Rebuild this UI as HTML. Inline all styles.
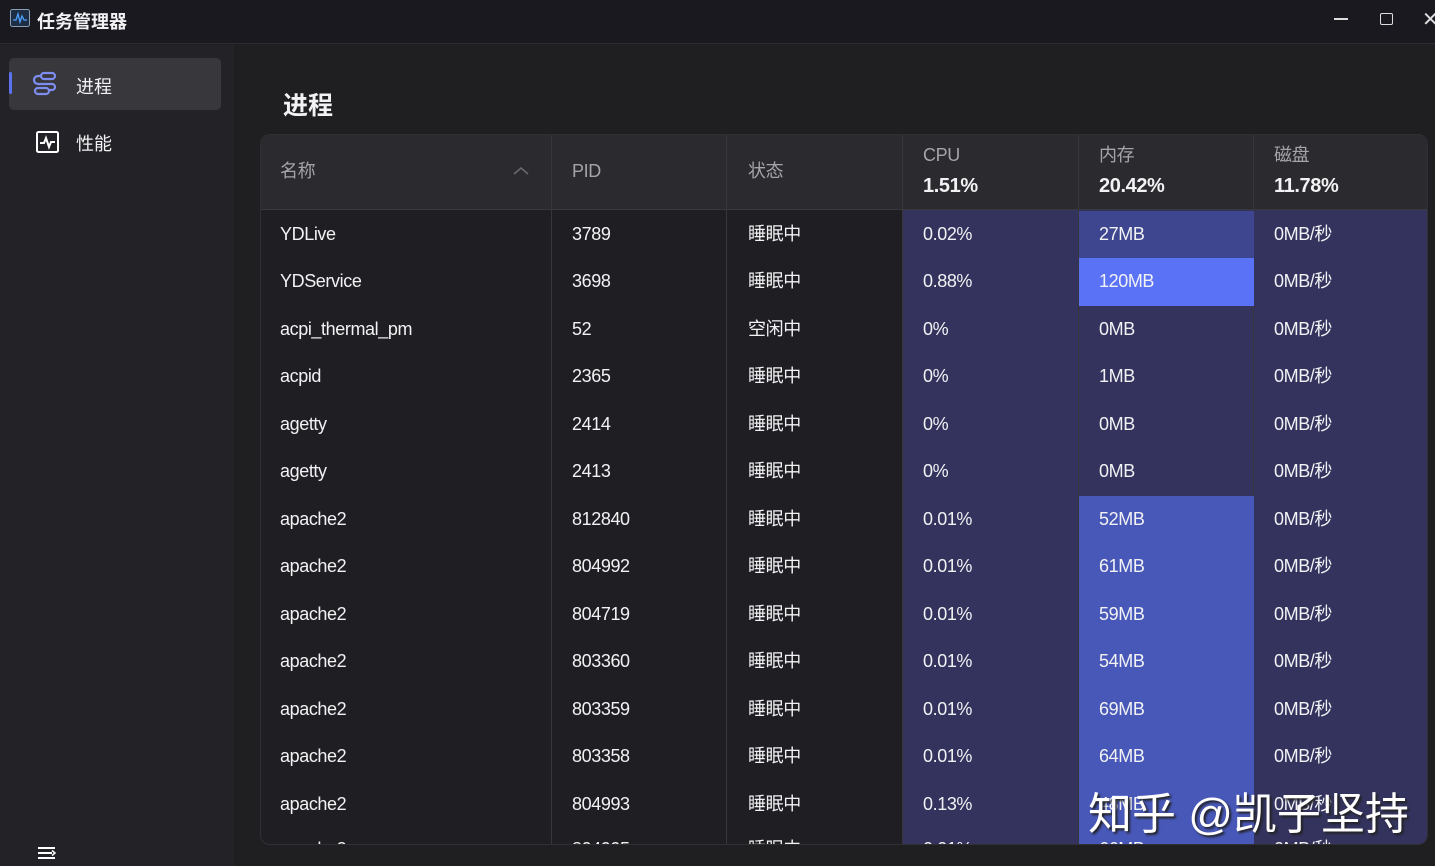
<!DOCTYPE html>
<html style="overflow:hidden;width:1435px;height:866px"><head><meta charset="utf-8"><style>
*{margin:0;padding:0;box-sizing:border-box}
body{width:1435px;height:866px;overflow:hidden;background:#1f1e21;font-family:"Liberation Sans","Noto Sans CJK SC",sans-serif;color:#f2f2f4;position:relative}
.tb{position:absolute;left:0;top:0;width:1435px;height:44px;background:#1b1920;border-bottom:1px solid #2e2c33}
.sb{position:absolute;left:0;top:45px;width:234px;height:821px;background:#232226}
.a{position:absolute;white-space:nowrap}
.tbl{position:absolute;left:260px;top:134px;width:1168px;height:711px;border-radius:10px;overflow:hidden;background:#1f1e22;border:1px solid #302f34}
.hd{position:absolute;left:0;top:0;width:1168px;height:75px;background:#2b2a2e;border-bottom:1px solid #3a393e}
.c{position:absolute;top:0;height:711px}
.r{position:absolute;font-size:18px;letter-spacing:-0.4px;line-height:20px}
</style></head><body>
<div class="tb">
<svg class="a" style="left:10px;top:9px" width="20" height="18" viewBox="0 0 20 18"><rect x="0.5" y="0.5" width="19" height="17" rx="2" fill="#1c2d44" stroke="#8aa0b8"/><path d="M3 11 L6 11 L8 5 L10 13 L12 7 L14 11 L17 11" fill="none" stroke="#4fa3ff" stroke-width="1.3"/></svg>
<div class="a" style="left:37px;top:8px;font-size:18px;font-weight:bold">任务管理器</div>
<div class="a" style="left:1334px;top:18px;width:14px;height:2px;background:#ddd"></div>
<div class="a" style="left:1380px;top:13px;width:13px;height:12px;border:1.5px solid #ddd;border-radius:2px"></div>
<div class="a" style="left:1422px;top:7px;font-size:20px;color:#ddd">✕</div>
</div>
<div class="sb">
<div class="a" style="left:9px;top:13px;width:212px;height:52px;background:#38373c;border-radius:5px"></div>
<div class="a" style="left:9px;top:27px;width:3px;height:22px;background:#5a72f0;border-radius:2px"></div>
<svg class="a" style="left:33px;top:26px" width="26" height="26" viewBox="0 0 26 26" fill="none" stroke="#7d8df0" stroke-width="2.2"><rect x="8" y="2" width="14" height="6" rx="3"/><rect x="2" y="17" width="14" height="6" rx="3"/><path d="M8 5 H5 a4 4 0 0 0 0 8 H19 a3 3 0 0 1 0 6 H16"/></svg>
<div class="a" style="left:76px;top:28px;font-size:18px">进程</div>
<svg class="a" style="left:36px;top:86px" width="23" height="22" viewBox="0 0 23 22" fill="none" stroke="#fff" stroke-width="2"><rect x="1" y="1" width="21" height="20" rx="1.5"/><path d="M4 12 H8 L10 7 L13 16 L15 11 H19"/></svg>
<div class="a" style="left:76px;top:85px;font-size:18px">性能</div>
<svg class="a" style="left:37px;top:800px" width="20" height="16" viewBox="0 0 20 16" fill="none" stroke="#fff" stroke-width="2"><path d="M1 3 H18 M1 8 H15 M1 13 H18"/><path d="M15 5.5 L18 8 L15 10.5" stroke-width="1.5"/></svg>
</div>
<div class="a" style="left:283px;top:86px;font-size:25px;font-weight:bold">进程</div>
<div class="tbl">
<div class="c" style="left:642px;width:176px;background:#33335e"></div>
<div class="c" style="left:818px;width:175px;background:#33335e"></div>
<div class="c" style="left:993px;width:175px;background:#33335e"></div>
<div class="hd"></div>
<div class="c" style="left:290px;width:1px;background:#37363b"></div>
<div class="c" style="left:465px;width:1px;background:#37363b"></div>
<div class="c" style="left:641px;width:1px;background:#37363b"></div>
<div class="c" style="left:817px;width:1px;background:#37363b"></div>
<div class="c" style="left:992px;width:1px;background:#37363b"></div>
<div class="r" style="left:19px;top:26px;color:#a5a4aa">名称</div>
<svg class="a" style="left:252px;top:31px" width="16" height="10"><path d="M1 8 L8 2 L15 8" fill="none" stroke="#6a696e" stroke-width="1.5"/></svg>
<div class="r" style="left:311px;top:26px;color:#a5a4aa">PID</div>
<div class="r" style="left:487px;top:26px;color:#a5a4aa">状态</div>
<div class="r" style="left:662px;top:10px;color:#a5a4aa">CPU</div>
<div class="r" style="left:662px;top:41px;font-weight:bold;font-size:20px">1.51%</div>
<div class="r" style="left:838px;top:10px;color:#a5a4aa">内存</div>
<div class="r" style="left:838px;top:41px;font-weight:bold;font-size:20px">20.42%</div>
<div class="r" style="left:1013px;top:10px;color:#a5a4aa">磁盘</div>
<div class="r" style="left:1013px;top:41px;font-weight:bold;font-size:20px">11.78%</div>
<div class="a" style="left:818px;top:76px;width:175px;height:47px;background:#3e468f"></div>
<div class="a" style="left:818px;top:123px;width:175px;height:48px;background:#5a72f6"></div>
<div class="a" style="left:818px;top:361px;width:175px;height:350px;background:#4858b8"></div>
<div class="r" style="left:19px;top:89px">YDLive</div><div class="r" style="left:311px;top:89px">3789</div><div class="r" style="left:487px;top:89px">睡眠中</div><div class="r" style="left:662px;top:89px">0.02%</div><div class="r" style="left:838px;top:89px">27MB</div><div class="r" style="left:1013px;top:89px">0MB/秒</div>
<div class="r" style="left:19px;top:136px">YDService</div><div class="r" style="left:311px;top:136px">3698</div><div class="r" style="left:487px;top:136px">睡眠中</div><div class="r" style="left:662px;top:136px">0.88%</div><div class="r" style="left:838px;top:136px">120MB</div><div class="r" style="left:1013px;top:136px">0MB/秒</div>
<div class="r" style="left:19px;top:184px">acpi_thermal_pm</div><div class="r" style="left:311px;top:184px">52</div><div class="r" style="left:487px;top:184px">空闲中</div><div class="r" style="left:662px;top:184px">0%</div><div class="r" style="left:838px;top:184px">0MB</div><div class="r" style="left:1013px;top:184px">0MB/秒</div>
<div class="r" style="left:19px;top:231px">acpid</div><div class="r" style="left:311px;top:231px">2365</div><div class="r" style="left:487px;top:231px">睡眠中</div><div class="r" style="left:662px;top:231px">0%</div><div class="r" style="left:838px;top:231px">1MB</div><div class="r" style="left:1013px;top:231px">0MB/秒</div>
<div class="r" style="left:19px;top:279px">agetty</div><div class="r" style="left:311px;top:279px">2414</div><div class="r" style="left:487px;top:279px">睡眠中</div><div class="r" style="left:662px;top:279px">0%</div><div class="r" style="left:838px;top:279px">0MB</div><div class="r" style="left:1013px;top:279px">0MB/秒</div>
<div class="r" style="left:19px;top:326px">agetty</div><div class="r" style="left:311px;top:326px">2413</div><div class="r" style="left:487px;top:326px">睡眠中</div><div class="r" style="left:662px;top:326px">0%</div><div class="r" style="left:838px;top:326px">0MB</div><div class="r" style="left:1013px;top:326px">0MB/秒</div>
<div class="r" style="left:19px;top:374px">apache2</div><div class="r" style="left:311px;top:374px">812840</div><div class="r" style="left:487px;top:374px">睡眠中</div><div class="r" style="left:662px;top:374px">0.01%</div><div class="r" style="left:838px;top:374px">52MB</div><div class="r" style="left:1013px;top:374px">0MB/秒</div>
<div class="r" style="left:19px;top:421px">apache2</div><div class="r" style="left:311px;top:421px">804992</div><div class="r" style="left:487px;top:421px">睡眠中</div><div class="r" style="left:662px;top:421px">0.01%</div><div class="r" style="left:838px;top:421px">61MB</div><div class="r" style="left:1013px;top:421px">0MB/秒</div>
<div class="r" style="left:19px;top:469px">apache2</div><div class="r" style="left:311px;top:469px">804719</div><div class="r" style="left:487px;top:469px">睡眠中</div><div class="r" style="left:662px;top:469px">0.01%</div><div class="r" style="left:838px;top:469px">59MB</div><div class="r" style="left:1013px;top:469px">0MB/秒</div>
<div class="r" style="left:19px;top:516px">apache2</div><div class="r" style="left:311px;top:516px">803360</div><div class="r" style="left:487px;top:516px">睡眠中</div><div class="r" style="left:662px;top:516px">0.01%</div><div class="r" style="left:838px;top:516px">54MB</div><div class="r" style="left:1013px;top:516px">0MB/秒</div>
<div class="r" style="left:19px;top:564px">apache2</div><div class="r" style="left:311px;top:564px">803359</div><div class="r" style="left:487px;top:564px">睡眠中</div><div class="r" style="left:662px;top:564px">0.01%</div><div class="r" style="left:838px;top:564px">69MB</div><div class="r" style="left:1013px;top:564px">0MB/秒</div>
<div class="r" style="left:19px;top:611px">apache2</div><div class="r" style="left:311px;top:611px">803358</div><div class="r" style="left:487px;top:611px">睡眠中</div><div class="r" style="left:662px;top:611px">0.01%</div><div class="r" style="left:838px;top:611px">64MB</div><div class="r" style="left:1013px;top:611px">0MB/秒</div>
<div class="r" style="left:19px;top:659px">apache2</div><div class="r" style="left:311px;top:659px">804993</div><div class="r" style="left:487px;top:659px">睡眠中</div><div class="r" style="left:662px;top:659px">0.13%</div><div class="r" style="left:838px;top:659px">48MB</div><div class="r" style="left:1013px;top:659px">0MB/秒</div>
<div class="r" style="left:19px;top:704px">apache2</div><div class="r" style="left:311px;top:704px">804995</div><div class="r" style="left:487px;top:704px">睡眠中</div><div class="r" style="left:662px;top:704px">0.01%</div><div class="r" style="left:838px;top:704px">66MB</div><div class="r" style="left:1013px;top:704px">0MB/秒</div>
</div>
<div class="a" style="left:1088px;top:778px;font-size:44px;font-weight:normal;color:#fff;text-shadow:2px 2px 2px #222">知乎 @凯子坚持</div>
</body></html>
